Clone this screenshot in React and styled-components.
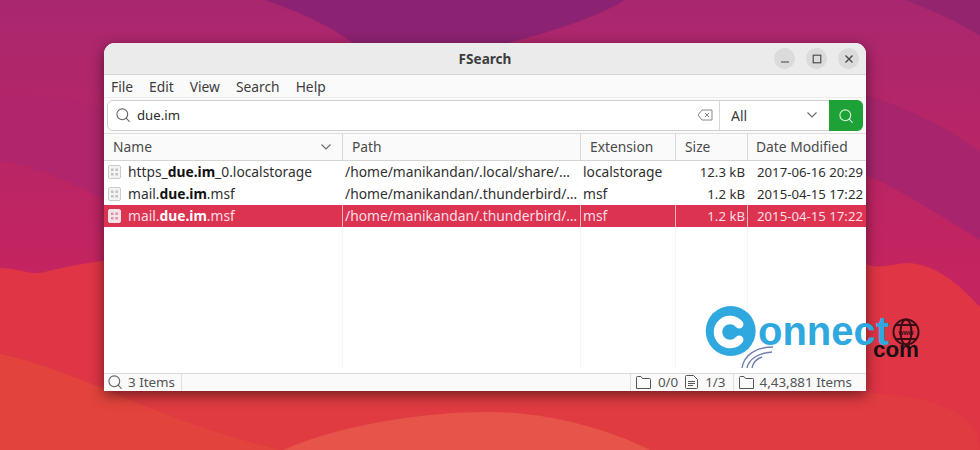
import React from 'react';
import styled, { createGlobalStyle } from 'styled-components';

const GlobalStyle = createGlobalStyle`
  html, body { margin: 0; padding: 0; }
  body { width: 980px; height: 450px; overflow: hidden; font-family: "Noto Sans", sans-serif; }
`;

const Desktop = styled.div`
  position: relative;
  width: 980px;
  height: 450px;
  box-sizing: border-box;
  padding: 43px 114px 59px 104px;
  overflow: hidden;
`;

const Wallpaper = styled.svg`
  position: absolute;
  inset: 0;
`;

const Window = styled.div`
  position: relative;
  height: 348px;
  display: flex;
  flex-direction: column;
  background: #fff;
  border-radius: 11px 11px 0 0;
  box-shadow: 0 4px 14px rgba(0, 0, 0, 0.5);
  overflow: hidden;
  color: #3d3d3d;
  font-size: 13.8px;
`;

const TitleBar = styled.div`
  height: 32px;
  flex: none;
  display: flex;
  align-items: center;
  justify-content: center;
  position: relative;
  background: #ebebeb;
  border-bottom: 1px solid #d4d4d4;
  box-sizing: border-box;
  font-weight: 700;
  font-size: 13.6px;
`;

const WindowButtons = styled.div`
  position: absolute;
  right: 7px;
  top: 5px;
  display: flex;
  gap: 11px;
`;

const WindowButton = styled.div`
  width: 21px;
  height: 21px;
  border-radius: 50%;
  background: #dbdbdb;
  display: flex;
  align-items: center;
  justify-content: center;
`;

const MenuBar = styled.div`
  height: 23px;
  flex: none;
  display: flex;
  align-items: center;
  gap: 16px;
  padding-left: 7px;
  background: #fafafa;
  border-bottom: 1px solid #ececec;
  box-sizing: border-box;
`;

const SearchRow = styled.div`
  height: 36px;
  flex: none;
  box-sizing: border-box;
  padding: 2px 3px;
  background: #fafafa;
  border-bottom: 1px solid #dedede;
`;

const SearchGroup = styled.div`
  height: 31px;
  display: flex;
  align-items: stretch;
  border: 1px solid #d0d0d0;
  border-radius: 6px;
  background: #fff;
  box-sizing: border-box;
`;

const SearchInput = styled.div`
  flex: 1;
  display: flex;
  align-items: center;
  gap: 7px;
  padding: 0 0 1px 8px;
  font-size: 13.2px;
  color: #2c2c2c;
`;

const ClearIcon = styled.svg`
  margin-left: auto;
  margin-right: 6px;
`;

const FilterSelect = styled.div`
  width: 111px;
  flex: none;
  box-sizing: border-box;
  border-left: 1px solid #d8d8d8;
  display: flex;
  align-items: center;
  justify-content: space-between;
  padding: 0 12px 1px 11px;
  font-size: 14px;
`;

const SearchButton = styled.div`
  width: 34px;
  flex: none;
  margin: -1px;
  background: #1ea136;
  border-radius: 0 6px 6px 0;
  display: flex;
  align-items: center;
  justify-content: center;
`;

const Table = styled.div`
  flex: 1;
  display: flex;
  flex-direction: column;
  min-height: 0;
  background: #fff;
`;

const columns = '239px 238px 95px 72px 118px';

const HeaderRow = styled.div`
  display: grid;
  grid-template-columns: ${columns};
  height: 27px;
  flex: none;
  box-sizing: border-box;
  border-bottom: 1px solid #d4d4d4;
  background: #fafafa;
`;

const HeaderCell = styled.div`
  display: flex;
  align-items: center;
  justify-content: space-between;
  padding: 0 10px 1px 9px;
  border-right: 1px solid #d9d9d9;
  color: #4a4a4a;
  white-space: nowrap;
  &:last-child { border-right: none; padding: 0 0 1px 8px; }
`;

const Row = styled.div`
  display: grid;
  grid-template-columns: ${columns};
  height: 22px;
  flex: none;
  background: ${p => (p.$selected ? '#db3350' : 'transparent')};
  color: ${p => (p.$selected ? '#fbdde3' : '#2f2f2f')};
  b { font-weight: 700; color: ${p => (p.$selected ? '#fff' : '#111')}; }
`;

const Cell = styled.div`
  display: flex;
  align-items: center;
  justify-content: ${p => (p.$right ? 'flex-end' : 'flex-start')};
  padding: ${p => p.$pad || '0 2px 1px'};
  font-size: ${p => p.$size || 'inherit'};
  white-space: nowrap;
  overflow: hidden;
  border-right: 1px solid ${p => (p.$selected ? '#f3b6c0' : 'transparent')};
  &:last-child { border-right: none; }
`;

const RowIcon = styled.svg`
  flex: none;
  margin-right: 7px;
`;

const Spacer = styled.div`
  flex: 1;
  display: grid;
  grid-template-columns: ${columns};
`;

const SpacerColumn = styled.div`
  border-right: 1px solid #f6f6f6;
  margin-bottom: 5px;
  &:last-child { border-right: none; }
`;

const StatusBar = styled.div`
  height: 18px;
  flex: none;
  display: flex;
  align-items: center;
  box-sizing: border-box;
  border-top: 1px solid #d9d9d9;
  background: #fafafa;
  color: #555;
  font-size: 13.4px;
`;

const StatusCell = styled.div`
  height: 100%;
  display: flex;
  align-items: center;
  gap: ${p => p.$gap || 6}px;
  padding: ${p => p.$pad};
  border-left: ${p => (p.$divided ? '1px solid #e0e0e0' : 'none')};
  border-right: ${p => (p.$closed ? '1px solid #e0e0e0' : 'none')};
  margin-left: ${p => (p.$push ? 'auto' : '0')};
`;

const Logo = styled.svg`
  position: absolute;
  left: 700px;
  top: 300px;
`;

const LogoWord = styled.text`
  font-family: "Liberation Sans", sans-serif;
  font-weight: 700;
`;

const SearchGlyph = ({ color = '#666' }) => (
  <svg width="14" height="14" viewBox="0 0 14 14" fill="none" stroke={color} strokeWidth="1.1">
    <circle cx="6.3" cy="6.3" r="5.4" />
    <path d="M10.2 10.2L13.2 13.4" strokeLinecap="round" />
  </svg>
);

const Chevron = () => (
  <svg width="12" height="8" viewBox="0 0 12 8" fill="none" stroke="#6a6a6a" strokeWidth="1.2">
    <path d="M1.5 1.5L6 6l4.5-4.5" />
  </svg>
);

const FolderGlyph = () => (
  <svg width="15" height="13" viewBox="0 0 15 13" fill="none" stroke="#555" strokeWidth="1">
    <path d="M.5 12.5V1.5a1 1 0 0 1 1-1h3.4l1.6 2h7a1 1 0 0 1 1 1v9z" />
  </svg>
);

const DocGlyph = () => (
  <svg width="13" height="14" viewBox="0 0 13 14" fill="none" stroke="#555" strokeWidth="1">
    <path d="M.5 1.5a1 1 0 0 1 1-1h7l4 4v8a1 1 0 0 1-1 1h-10a1 1 0 0 1-1-1z" />
    <path d="M3 6.5h7M3 8.5h7M3 10.5h5" />
  </svg>
);

const FileIcon = ({ selected }) => (
  <RowIcon width="13" height="14" viewBox="0 0 13 14">
    <rect x=".5" y=".5" width="12" height="13" rx="1.5" fill={selected ? '#f5e3e7' : '#f4f4f4'} stroke={selected ? '#f5e3e7' : '#cccccc'} />
    <path d="M3 3.5h2.6v2.6H3zM7.4 3.5H10v2.6H7.4zM3 8h2.6v2.6H3zM7.4 8H10v2.6H7.4z" fill={selected ? '#d498a4' : '#c2c2c2'} />
  </RowIcon>
);

const rows = [
  { pre: 'https_', match: 'due.im', post: '_0.localstorage', path: '/home/manikandan/.local/share/…', ext: 'localstorage', size: '12.3 kB', date: '2017-06-16 20:29' },
  { pre: 'mail.', match: 'due.im', post: '.msf', path: '/home/manikandan/.thunderbird/…', ext: 'msf', size: '1.2 kB', date: '2015-04-15 17:22' },
  { pre: 'mail.', match: 'due.im', post: '.msf', path: '/home/manikandan/.thunderbird/…', ext: 'msf', size: '1.2 kB', date: '2015-04-15 17:22', selected: true },
];

const App = () => (
  <Desktop>
    <GlobalStyle />
    <Wallpaper width="980" height="450" viewBox="0 0 980 450">
      <defs>
        <linearGradient id="wall" x1="0" y1="0" x2="0" y2="1">
          <stop offset="0" stopColor="#a9276f" />
          <stop offset="0.6" stopColor="#c4245f" />
        </linearGradient>
      </defs>
      <rect width="980" height="450" fill="url(#wall)" />
      {/* darker purple folds along the top */}
      <path d="M265 0C300 12 335 28 355 45H500C560 30 600 15 625 0Z" fill="#8c2272" />
      <path d="M905 0C930 10 960 22 980 36V0Z" fill="#93256f" />
      <path d="M866 95C900 105 945 125 980 152V240C940 215 900 190 866 175Z" fill="#a8256d" />
      <path d="M0 95C40 95 75 100 104 108V200C70 180 30 165 0 160Z" fill="#b0256b" />
      {/* red hills */}
      <path d="M0 268C15 268 28 274 40 273C60 268 85 263 110 260H860C875 272 890 264 906 263C935 263 960 285 980 307V450H0Z" fill="#df3545" />
      <path d="M0 354C35 360 70 375 110 392H860C900 395 980 400 980 450H0Z" fill="#e03b40" />
      <path d="M0 354C35 362 80 378 130 400C190 425 240 440 280 450H0Z" fill="#e2433c" />
      <path d="M283 450C340 425 420 412 490 412C550 412 610 430 650 450Z" fill="#e6544a" />
    </Wallpaper>
    <Window>
      <TitleBar>
        FSearch
        <WindowButtons>
          <WindowButton>
            <svg width="10" height="10" viewBox="0 0 10 10" stroke="#444" strokeWidth="1.2"><path d="M1 8h8" /></svg>
          </WindowButton>
          <WindowButton>
            <svg width="10" height="10" viewBox="0 0 10 10" fill="none" stroke="#444" strokeWidth="1.1"><rect x="1.2" y="1.2" width="7.6" height="7.6" /></svg>
          </WindowButton>
          <WindowButton>
            <svg width="10" height="10" viewBox="0 0 10 10" stroke="#444" strokeWidth="1.3"><path d="M1.5 1.5l7 7M8.5 1.5l-7 7" /></svg>
          </WindowButton>
        </WindowButtons>
      </TitleBar>
      <MenuBar>
        <span>File</span><span>Edit</span><span>View</span><span>Search</span><span>Help</span>
      </MenuBar>
      <SearchRow>
        <SearchGroup>
          <SearchInput>
            <SearchGlyph />
            due.im
            <ClearIcon width="16" height="12" viewBox="0 0 16 12" fill="none" stroke="#888">
              <path d="M5 1h10v10H5L1 6z" />
              <path d="M8 4l4 4M12 4l-4 4" />
            </ClearIcon>
          </SearchInput>
          <FilterSelect>
            All
            <Chevron />
          </FilterSelect>
          <SearchButton><SearchGlyph color="#d8f3dd" /></SearchButton>
        </SearchGroup>
      </SearchRow>
      <Table>
        <HeaderRow>
          <HeaderCell>Name <Chevron /></HeaderCell>
          <HeaderCell>Path</HeaderCell>
          <HeaderCell>Extension</HeaderCell>
          <HeaderCell>Size</HeaderCell>
          <HeaderCell>Date Modified</HeaderCell>
        </HeaderRow>
        {rows.map((r, i) => (
          <Row key={i} $selected={r.selected}>
            <Cell $selected={r.selected} $pad="0 2px 1px 4px">
              <FileIcon selected={r.selected} />
              <span>{r.pre}<b>{r.match}</b>{r.post}</span>
            </Cell>
            <Cell $selected={r.selected}>{r.path}</Cell>
            <Cell $selected={r.selected}>{r.ext}</Cell>
            <Cell $selected={r.selected} $right $pad="0 2px 1px 0" $size="13.2px">{r.size}</Cell>
            <Cell $selected={r.selected} $pad="0 0 1px 9px" $size="13.2px">{r.date}</Cell>
          </Row>
        ))}
        <Spacer>
          <SpacerColumn /><SpacerColumn /><SpacerColumn /><SpacerColumn /><SpacerColumn />
        </Spacer>
      </Table>
      <StatusBar>
        <StatusCell $closed $pad="0 6px 1px 4px"><SearchGlyph />3 Items</StatusCell>
        <StatusCell $push $divided $gap={7} $pad="0 7px 1px 5px">
          <FolderGlyph />0/0<DocGlyph />1/3
        </StatusCell>
        <StatusCell $divided $pad="0 14px 1px 5px"><FolderGlyph />4,43,881 Items</StatusCell>
      </StatusBar>
    </Window>
    <Logo width="225" height="75" viewBox="0 0 225 75">
      <circle cx="30.7" cy="31" r="25" fill="#2fa8e0" />
      <path d="M39.2 24.3a12 12 0 1 0 0 15.4" fill="none" stroke="#fff" strokeWidth="8.5" strokeLinecap="round" />
      <LogoWord x="58" y="45" fontSize="40" fill="#2fa8e0" textLength="131" lengthAdjust="spacingAndGlyphs">onnect</LogoWord>
      <LogoWord x="173" y="57" fontSize="22" fill="#1a1014" textLength="46" lengthAdjust="spacingAndGlyphs">com</LogoWord>
      <g fill="none" stroke="#3a0d16" strokeWidth="2">
        <circle cx="206" cy="32" r="12.5" />
        <ellipse cx="206" cy="32" rx="5.5" ry="12.5" />
        <path d="M195 25h22M195 39h22" />
      </g>
      <LogoWord x="206" y="34.5" fontSize="6.5" fill="#3a0d16" textAnchor="middle">www</LogoWord>
      <g fill="none" stroke="#6f7fb0" strokeWidth="1.4">
        <path d="M42 68C44 55 56 47 73 47" />
        <path d="M47 68C49 59 58 53 72 52" />
        <path d="M52 68C53 63 56 59 62 57" />
      </g>
    </Logo>
  </Desktop>
);

export default App;
